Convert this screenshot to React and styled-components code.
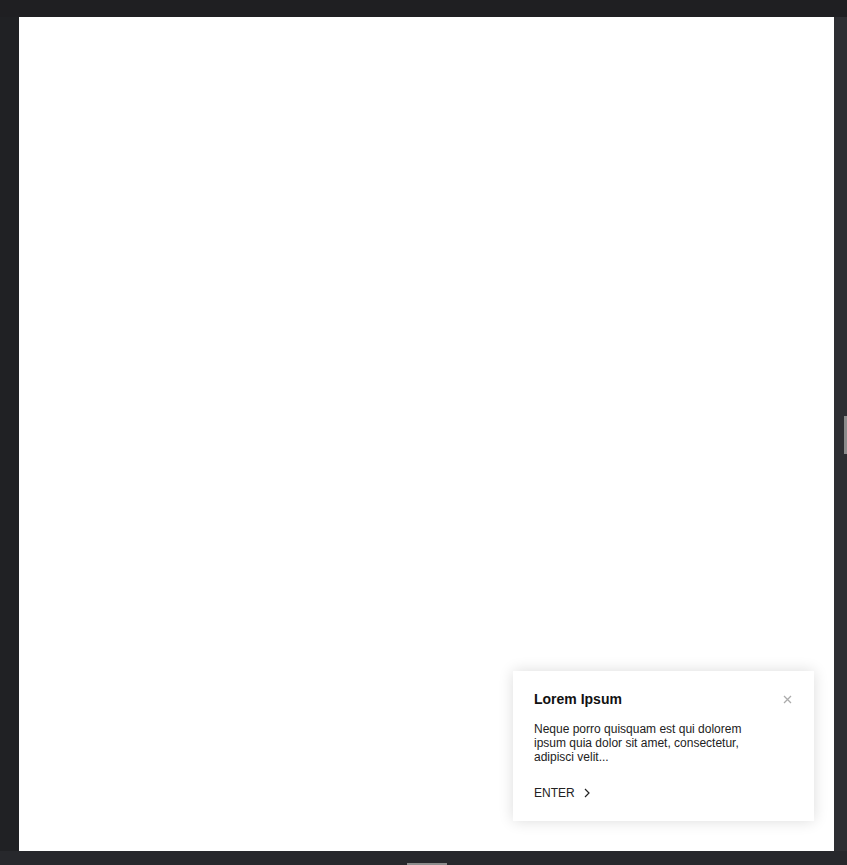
import React from "react";
import styled, { createGlobalStyle } from "styled-components";

const GlobalStyle = createGlobalStyle`
  html, body {
    margin: 0;
    padding: 0;
    background: #202124;
    font-family: "Liberation Sans", Arial, sans-serif;
  }
`;

const App = () => {
  return (
    <>
      <GlobalStyle />
      <Frame>
        <TopBar />
        <Middle>
          <Gutter />
          <Viewport>
            <Toast>
              <Header>
                <Title>Lorem Ipsum</Title>
                <CloseButton aria-label="close">
                  <svg width="9" height="9" viewBox="0 0 9 9">
                    <path d="M1 1L8 8M8 1L1 8" stroke="#ababab" strokeWidth="1.3" />
                  </svg>
                </CloseButton>
              </Header>
              <Body>
                Neque porro quisquam est qui dolorem ipsum quia dolor sit amet,
                consectetur, adipisci velit...
              </Body>
              <EnterLink>
                ENTER
                <svg width="6" height="10" viewBox="0 0 6 10">
                  <path d="M1 1L5 5L1 9" fill="none" stroke="#222" strokeWidth="1.2" />
                </svg>
              </EnterLink>
            </Toast>
          </Viewport>
          <VScroll>
            <VThumb />
          </VScroll>
        </Middle>
        <HScroll>
          <HThumb />
        </HScroll>
      </Frame>
    </>
  );
};

export default App;

const Frame = styled.div`
  display: flex;
  flex-direction: column;
  width: 847px;
  height: 865px;
  overflow: hidden;
`;

const TopBar = styled.div`
  height: 17px;
  background: #1f1f22;
`;

const Middle = styled.div`
  display: flex;
  height: 834px;
`;

const Gutter = styled.div`
  width: 19px;
  background: #202124;
`;

const Viewport = styled.div`
  width: 815px;
  background: #ffffff;
  display: flex;
  justify-content: flex-end;
  align-items: flex-end;
  padding: 0 20px 30px 0;
  box-sizing: border-box;
`;

const VScroll = styled.div`
  position: relative;
  width: 13px;
  background: #2e2f33;
`;

const VThumb = styled.div`
  position: absolute;
  top: 399px;
  right: 0;
  width: 3px;
  height: 38px;
  background: #8c8c8c;
`;

const HScroll = styled.div`
  position: relative;
  height: 14px;
  background: #27282c;
`;

const HThumb = styled.div`
  position: absolute;
  left: 407px;
  bottom: 0;
  width: 40px;
  height: 2px;
  background: #8c8c8c;
`;

const Toast = styled.div`
  width: 301px;
  box-sizing: border-box;
  padding: 20px 22px 21px 21px;
  background: #ffffff;
  box-shadow: 0 0 14px rgba(0, 0, 0, 0.14);
  display: flex;
  flex-direction: column;
`;

const Header = styled.div`
  display: flex;
  justify-content: space-between;
  align-items: center;
  height: 16px;
`;

const Title = styled.div`
  font-size: 14px;
  font-weight: 700;
  line-height: 16px;
  color: #111;
`;

const CloseButton = styled.button`
  border: none;
  background: none;
  padding: 0;
  display: flex;
  cursor: pointer;
`;

const Body = styled.p`
  margin: 15px 0 0;
  font-size: 12px;
  line-height: 14px;
  color: #222;
  padding-right: 40px;
`;

const EnterLink = styled.div`
  margin-top: 22px;
  display: flex;
  align-items: center;
  gap: 9px;
  font-size: 12px;
  line-height: 14px;
  color: #222;
`;
